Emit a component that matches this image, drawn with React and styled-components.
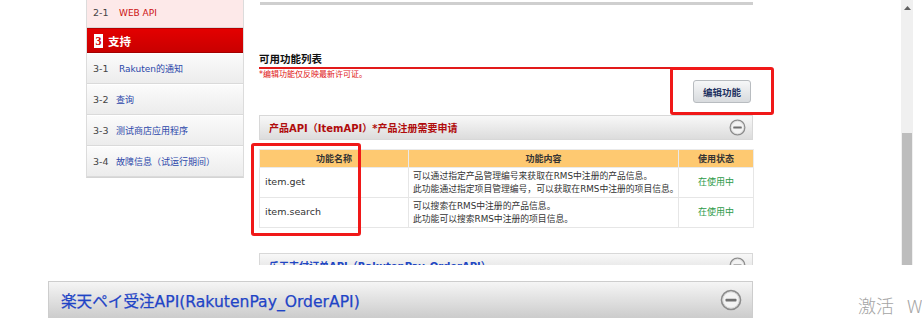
import styled, { createGlobalStyle } from "styled-components";

const GlobalStyle = createGlobalStyle`
  html, body {
    margin: 0;
    padding: 0;
    background: #fff;
  }
  body {
    font-family: "DejaVu Sans", "Noto Sans CJK SC", sans-serif;
  }
`;

const Screen = styled.div`
  width: 922px;
  height: 320px;
  overflow: hidden;
  background: #fff;
  display: flex;
  flex-direction: column;
`;

const Viewport = styled.div`
  display: flex;
  flex: 0 0 265px;
  height: 265px;
  overflow: hidden;
`;

const Page = styled.div`
  position: relative;
  flex: 0 0 901px;
  box-sizing: border-box;
  padding-left: 86px;
  display: flex;
  align-items: flex-start;
  gap: 15px;
  overflow: hidden;
`;

/* ---------- sidebar ---------- */

const Sidebar = styled.div`
  width: 158px;
  box-sizing: border-box;
  margin-top: -3px;
  border-left: 1px solid #dcdcdc;
  border-right: 1px solid #dcdcdc;
  border-bottom: 1px solid #d4d4d4;
`;

const SideItem = styled.div`
  height: 31px;
  box-sizing: border-box;
  display: flex;
  align-items: center;
  padding-left: 6px;
  border-bottom: 1px solid #dadada;
  border-top: 1px solid #fff;
  background: ${(p) =>
    p.$current ? "#fde9e9" : "linear-gradient(#fbfbfb, #ececec)"};
`;

const SideNum = styled.span`
  width: 23px;
  font-size: 9.5px;
  color: #444;
`;

const SideLabel = styled.span`
  font-size: 9px;
  color: ${(p) => (p.$current ? "#cc1111" : "#2b47aa")};
  padding-left: ${(p) => (p.$pad ? "3px" : "0")};
`;

const SideHeader = styled.div`
  height: 25px;
  box-sizing: border-box;
  display: flex;
  align-items: center;
  gap: 5px;
  padding-left: 7px;
  background: linear-gradient(#e30000, #c90000);
  border-top: 1px solid #b80000;
  border-bottom: 1px solid #a30000;
`;

const SideBadge = styled.span`
  width: 9px;
  height: 14px;
  background: #fff;
  color: #d00000;
  font-family: "Liberation Serif", serif;
  font-weight: bold;
  font-size: 12px;
  line-height: 14px;
  text-align: center;
`;

const SideHeaderText = styled.span`
  color: #fff;
  font-family: "Noto Sans CJK SC", sans-serif;
  font-weight: bold;
  font-size: 11.5px;
`;

/* ---------- main column ---------- */

const Main = styled.div`
  width: 494px;
  flex-shrink: 0;
  display: flex;
  flex-direction: column;
`;

const TopRule = styled.div`
  height: 3px;
  margin: 2px 0 0 1px;
  background: #cfcfcf;
`;

const Title = styled.div`
  margin-top: 46px;
  height: 16px;
  line-height: 16px;
  font-family: "Noto Sans CJK SC", sans-serif;
  font-size: 10.5px;
  font-weight: bold;
  color: #111;
  border-bottom: 2px solid #e21a1a;
`;

const Note = styled.div`
  margin-top: 1px;
  font-size: 8px;
  line-height: 10px;
  color: #e01515;
`;

const ButtonRow = styled.div`
  display: flex;
  justify-content: flex-end;
  padding-right: 2px;
`;

const EditButton = styled.button`
  width: 58px;
  height: 23px;
  border: 1px solid #b8bcc0;
  border-radius: 3px;
  background: linear-gradient(#f6f7f8, #d8dbde);
  font-family: "Noto Sans CJK SC", sans-serif;
  font-size: 9.5px;
  font-weight: bold;
  color: #1c3060;
  padding: 0;
`;

const SectionBar = styled.div`
  margin-top: ${(p) => p.$gap}px;
  height: 25px;
  flex-shrink: 0;
  box-sizing: border-box;
  display: flex;
  align-items: center;
  justify-content: space-between;
  padding: 0 6px 0 9px;
  border: 1px solid #d8d8d8;
  background: linear-gradient(#f8f8f8, #dcdcdc);
`;

const SectionTitle = styled.span`
  font-size: 10px;
  font-weight: bold;
  color: ${(p) => (p.$tone === "blue" ? "#2146c2" : "#b00c0c")};
  white-space: nowrap;
`;

const FuncTable = styled.table`
  margin-top: 9px;
  width: 494px;
  table-layout: fixed;
  border-collapse: collapse;
  font-size: 8.8px;
  color: #333;

  th {
    height: 17px;
    padding: 0;
    background: #fec971;
    border: 1px solid #eaeaea;
    font-family: "Noto Sans CJK SC", sans-serif;
    font-weight: bold;
    font-size: 9px;
    color: #333;
  }

  td {
    height: 29px;
    padding: 0 4px;
    border: 1px solid #e6e6e6;
    line-height: 12.5px;
    white-space: nowrap;
  }
`;

const StatusCell = styled.td`
  text-align: center;
  color: #2c9a48;
  && {
    font-size: 9px;
  }
`;

const NameCell = styled.td`
  color: #333;
  && {
    font-size: 9.5px;
    padding-left: 5px;
  }
`;

/* ---------- overlays ---------- */

const Annotation = styled.div`
  position: absolute;
  left: ${(p) => p.$x}px;
  top: ${(p) => p.$y}px;
  width: ${(p) => p.$w}px;
  height: ${(p) => p.$h}px;
  box-sizing: border-box;
  border: 3px solid #f01818;
  border-radius: 3px;
  pointer-events: none;
`;

/* ---------- scrollbar ---------- */

const Scrollbar = styled.div`
  flex: 0 0 12px;
  display: flex;
  flex-direction: column;
  background: #f0f0f0;
`;

const ScrollArrow = styled.div`
  height: 133px;
  display: flex;
  justify-content: center;
  padding-top: 6px;
  box-sizing: border-box;
`;

const ScrollThumb = styled.div`
  flex: 1;
  margin: 0 1px;
  background: #bdbdbd;
`;

/* ---------- bottom strip ---------- */

const BottomStrip = styled.div`
  flex: 1;
  display: flex;
  align-items: flex-start;
  padding-left: 48px;
  overflow: hidden;
`;

const BigBar = styled.div`
  flex: 0 0 705px;
  margin-top: 16px;
  height: 37px;
  box-sizing: border-box;
  display: flex;
  align-items: center;
  justify-content: space-between;
  padding: 0 10px 0 12px;
  border: 1px solid #cdcdcd;
  background: linear-gradient(#f5f5f5, #cdcdcd);
`;

const BigTitle = styled.span`
  font-family: "DejaVu Sans", "Noto Sans CJK JP", sans-serif;
  font-size: 15.6px;
  color: #1f44c6;
  white-space: nowrap;
  -webkit-text-stroke: 0.25px #1f44c6;
`;

const Watermark = styled.div`
  flex-shrink: 0;
  margin: 27px 0 0 105px;
  font-family: "Noto Sans CJK SC", sans-serif;
  font-weight: 300;
  font-size: 18px;
  word-spacing: 9px;
  color: #a4a4a4;
  white-space: nowrap;
`;

function MinusCircle({ size }) {
  return (
    <svg width={size} height={size} viewBox="0 0 20 20">
      <circle cx="10" cy="10" r="8.6" fill="#f3f3f3" stroke="#8c8c8c" strokeWidth="1.6" />
      <circle cx="10" cy="10" r="7.4" fill="none" stroke="#d4d4d4" strokeWidth="0.8" />
      <rect x="5" y="8.9" width="10" height="2.4" rx="0.6" fill="#707070" />
    </svg>
  );
}

const supportItems = [
  { num: "3-1", label: "Rakuten的通知", pad: true },
  { num: "3-2", label: "查询" },
  { num: "3-3", label: "测试商店应用程序" },
  { num: "3-4", label: "故障信息（试运行期间）" },
];

const functions = [
  {
    name: "item.get",
    desc: [
      "可以通过指定产品管理编号来获取在RMS中注册的产品信息。",
      "此功能通过指定项目管理编号，可以获取在RMS中注册的项目信息。",
    ],
  },
  {
    name: "item.search",
    desc: ["可以搜索在RMS中注册的产品信息。", "此功能可以搜索RMS中注册的项目信息。"],
  },
];

export default function App() {
  return (
    <Screen>
      <GlobalStyle />
      <Viewport>
        <Page>
          <Sidebar>
            <SideItem $current>
              <SideNum>2-1</SideNum>
              <SideLabel $current $pad>
                WEB API
              </SideLabel>
            </SideItem>
            <SideHeader>
              <SideBadge>3</SideBadge>
              <SideHeaderText>支持</SideHeaderText>
            </SideHeader>
            {supportItems.map((item) => (
              <SideItem key={item.num}>
                <SideNum>{item.num}</SideNum>
                <SideLabel $pad={item.pad}>{item.label}</SideLabel>
              </SideItem>
            ))}
          </Sidebar>

          <Main>
            <TopRule />
            <Title>可用功能列表</Title>
            <Note>*编辑功能仅反映最新许可证。</Note>
            <ButtonRow>
              <EditButton>编辑功能</EditButton>
            </ButtonRow>

            <SectionBar $gap={12}>
              <SectionTitle>产品API（ItemAPI）*产品注册需要申请</SectionTitle>
              <MinusCircle size={17} />
            </SectionBar>

            <FuncTable>
              <colgroup>
                <col style={{ width: 149 }} />
                <col style={{ width: 270 }} />
                <col style={{ width: 75 }} />
              </colgroup>
              <thead>
                <tr>
                  <th>功能名称</th>
                  <th>功能内容</th>
                  <th>使用状态</th>
                </tr>
              </thead>
              <tbody>
                {functions.map((f) => (
                  <tr key={f.name}>
                    <NameCell>{f.name}</NameCell>
                    <td>
                      {f.desc[0]}
                      <br />
                      {f.desc[1]}
                    </td>
                    <StatusCell>在使用中</StatusCell>
                  </tr>
                ))}
              </tbody>
            </FuncTable>

            <SectionBar $gap={25}>
              <SectionTitle $tone="blue">乐天支付订单API（RakutenPay_OrderAPI）</SectionTitle>
              <MinusCircle size={17} />
            </SectionBar>
          </Main>

          <Annotation $x={670} $y={67} $w={104} $h={48} />
          <Annotation $x={251} $y={143} $w={110} $h={93} />
        </Page>

        <Scrollbar>
          <ScrollArrow>
            <svg width="7" height="4" viewBox="0 0 7 4">
              <polygon points="3.5,0 7,4 0,4" fill="#606060" />
            </svg>
          </ScrollArrow>
          <ScrollThumb />
        </Scrollbar>
      </Viewport>

      <BottomStrip>
        <BigBar>
          <BigTitle>楽天ペイ受注API(RakutenPay_OrderAPI)</BigTitle>
          <MinusCircle size={22} />
        </BigBar>
        <Watermark>激活 Windows</Watermark>
      </BottomStrip>
    </Screen>
  );
}
